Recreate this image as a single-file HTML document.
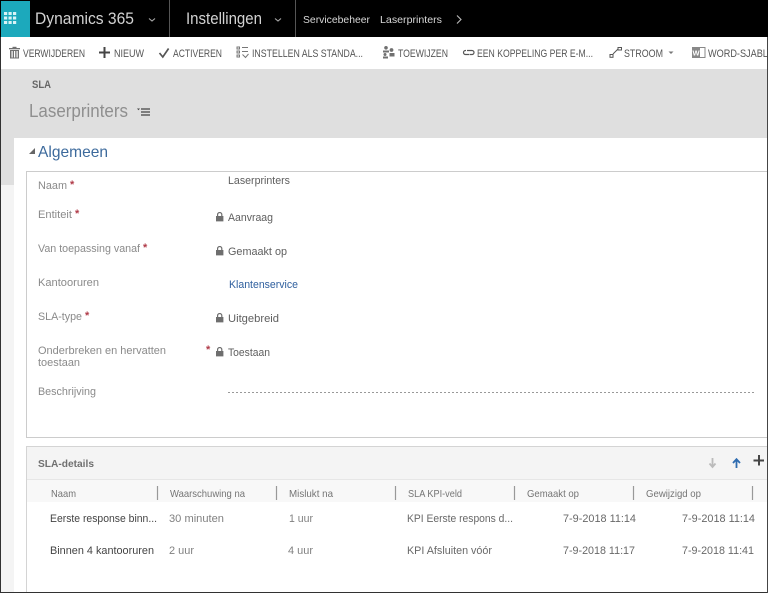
<!DOCTYPE html>
<html><head><meta charset="utf-8"><style>
html,body{margin:0;padding:0;background:#fff;width:768px;height:593px;overflow:hidden}
svg{display:block}
text{font-family:"Liberation Sans",sans-serif;white-space:pre}
.c{font-size:11px;fill:#555}
.l{font-size:11px;fill:#8a8a8a}
.v{font-size:11px;fill:#5e5e5e}
.h{font-size:10.500px;fill:#747474}
.r{font-size:11px;fill:#686868}
.s{font-size:11px;fill:#b03a48;font-weight:bold}
</style></head><body>
<svg width="768" height="593" viewBox="0 0 768 593" xmlns="http://www.w3.org/2000/svg">
<defs><filter id="b" x="0" y="0" width="100%" height="100%"><feGaussianBlur stdDeviation="0.38"/></filter>
<path id="lock" d="M0 4h1V2.600C1 1 2.200 0 3.700 0S6.400 1 6.400 2.600V4h1v5.400H0zM2.200 4h3V2.600c0-.9-.6-1.500-1.500-1.500S2.200 1.700 2.200 2.600z" fill="#6e6e6e"/></defs>
<g filter="url(#b)">
<rect width="768" height="593" fill="#fff"/>
<!-- top bar -->
<rect width="768" height="37" fill="#000"/>
<rect x="1" y="1" width="29" height="36" fill="#1aa9bc"/>
<g fill="#d8f3f6"><rect x="4" y="12" width="3.200" height="3"/><rect x="8.500" y="12" width="3.200" height="3"/><rect x="13" y="12" width="3.200" height="3"/><rect x="4" y="16.500" width="3.200" height="3"/><rect x="8.500" y="16.500" width="3.200" height="3"/><rect x="13" y="16.500" width="3.200" height="3"/><rect x="4" y="21" width="3.200" height="3"/><rect x="8.500" y="21" width="3.200" height="3"/><rect x="13" y="21" width="3.200" height="3"/></g>
<text x="35" y="24" font-size="16.500" fill="#d2d2d2" textLength="99" lengthAdjust="spacingAndGlyphs">Dynamics 365</text>
<path d="M149 18.500l3 2.500 3-2.500" fill="none" stroke="#aaa" stroke-width="1.100"/>
<rect x="169" y="0" width="1" height="37" fill="#555"/>
<text x="186" y="24" font-size="16.500" fill="#d2d2d2" textLength="76" lengthAdjust="spacingAndGlyphs">Instellingen</text>
<path d="M275 18.500l3 2.500 3-2.500" fill="none" stroke="#aaa" stroke-width="1.100"/>
<rect x="295" y="0" width="1" height="37" fill="#555"/>
<text x="303" y="23" font-size="10.500" fill="#d8d8d8" textLength="67" lengthAdjust="spacingAndGlyphs">Servicebeheer</text>
<text x="380" y="23" font-size="10.500" fill="#d8d8d8" textLength="62" lengthAdjust="spacingAndGlyphs">Laserprinters</text>
<path d="M457 15.500l4 4-4 4" fill="none" stroke="#bbb" stroke-width="1.100"/>
<!-- command bar -->
<rect x="0" y="37" width="768" height="32" fill="#fff"/>
<g fill="#707070"><rect x="9" y="48" width="11" height="1.300"/><rect x="12.500" y="46.800" width="4" height="1.200"/><path d="M10 50h9v8.500h-9zM11.500 51v6.500h1.200V51zM14 51v6.500h1.200V51zM16.500 51v6.500h1.200V51z" fill-rule="evenodd"/></g>
<text class="c" x="23" y="57" textLength="62" lengthAdjust="spacingAndGlyphs">VERWIJDEREN</text>
<path d="M104.500 47v11M99 52.500h11" stroke="#444" stroke-width="2" fill="none"/>
<text class="c" x="114" y="57" textLength="30" lengthAdjust="spacingAndGlyphs">NIEUW</text>
<path d="M159.500 53l3.300 4 5.800-8.500" stroke="#555" stroke-width="1.700" fill="none"/>
<text class="c" x="173" y="57" textLength="49" lengthAdjust="spacingAndGlyphs">ACTIVEREN</text>
<g fill="none" stroke="#777" stroke-width="1"><rect x="237" y="47" width="2.500" height="2"/><rect x="237" y="51" width="2.500" height="2"/><rect x="237" y="55" width="2.500" height="2"/><path d="M242 47.500h6M242 51.500h6M242.500 54.500l3 3 3-3.500"/></g>
<text class="c" x="252" y="57" textLength="111" lengthAdjust="spacingAndGlyphs">INSTELLEN ALS STANDA...</text>
<g fill="#707070"><circle cx="386" cy="47.800" r="1.800"/><path d="M383 50.500h6v2h-6z"/><circle cx="385" cy="54.500" r="1.500"/><path d="M383 56.500h5v2h-5z"/><circle cx="391.500" cy="50" r="1.900"/><path d="M389.500 53h5v3.500h-5z"/></g>
<text class="c" x="398" y="57" textLength="50" lengthAdjust="spacingAndGlyphs">TOEWIJZEN</text>
<g fill="none" stroke="#555" stroke-width="1.200"><path d="M466 50.500h-.5a2 2 0 0 0 0 4H469M469.500 54.500h2.500a2 2 0 0 0 0-4h-5"/></g>
<text class="c" x="477" y="57" textLength="116" lengthAdjust="spacingAndGlyphs">EEN KOPPELING PER E-M...</text>
<g fill="none" stroke="#555" stroke-width="1"><rect x="610" y="54.500" width="3" height="2.800"/><path d="M613 54l5-5"/><rect x="618" y="47.500" width="3.500" height="2.500"/></g>
<text class="c" x="624" y="57" textLength="39" lengthAdjust="spacingAndGlyphs">STROOM</text>
<path d="M668.500 51.500h5l-2.500 2.500z" fill="#777"/>
<rect x="697" y="47.500" width="8" height="10" fill="#fff" stroke="#888"/>
<rect x="692" y="47" width="8" height="11" fill="#888"/>
<text x="692.500" y="55.500" font-size="7.500" fill="#fff" font-weight="bold">W</text>
<text class="c" x="708" y="57" textLength="67" lengthAdjust="spacingAndGlyphs">WORD-SJABLO</text>
<!-- header -->
<rect x="0" y="69" width="768" height="69" fill="#dfdfdf"/>
<text x="32" y="88" font-size="11" font-weight="bold" fill="#666" textLength="19" lengthAdjust="spacingAndGlyphs">SLA</text>
<text x="29" y="117" font-size="18" fill="#8f8f8f" textLength="99" lengthAdjust="spacingAndGlyphs">Laserprinters</text>
<path d="M137 108.500h3l-1.500 1.700z" fill="#444"/><path d="M141 109h9M141 112h9M141 115h9" stroke="#444" stroke-width="1.300"/>
<!-- left strip -->
<rect x="1" y="138" width="13" height="47" fill="#dfdfdf"/>
<rect x="1" y="185" width="13" height="408" fill="#f4f4f4"/>
<!-- section -->
<path d="M35 148v6h-6z" fill="#666"/>
<text x="38" y="157" font-size="16" fill="#3c6a9c" textLength="70" lengthAdjust="spacingAndGlyphs">Algemeen</text>
<path d="M768 171.500H26.500V437.500H768" fill="none" stroke="#ccc"/>
<text class="l" x="38" y="189" textLength="29" lengthAdjust="spacingAndGlyphs">Naam</text><text class="s" x="70" y="188">*</text>
<text class="l" x="38" y="218" textLength="34" lengthAdjust="spacingAndGlyphs">Entiteit</text><text class="s" x="75" y="217">*</text>
<text class="l" x="38" y="252" textLength="102" lengthAdjust="spacingAndGlyphs">Van toepassing vanaf</text><text class="s" x="143" y="251">*</text>
<text class="l" x="38" y="286" textLength="61" lengthAdjust="spacingAndGlyphs">Kantooruren</text>
<text class="l" x="38" y="320" textLength="44" lengthAdjust="spacingAndGlyphs">SLA-type</text><text class="s" x="85" y="319">*</text>
<text class="l" x="38" y="354" textLength="128" lengthAdjust="spacingAndGlyphs">Onderbreken en hervatten</text>
<text class="l" x="38" y="366" textLength="42" lengthAdjust="spacingAndGlyphs">toestaan</text><text class="s" x="206" y="353">*</text>
<text class="l" x="38" y="395" textLength="58" lengthAdjust="spacingAndGlyphs">Beschrijving</text>
<text class="v" x="228" y="184" textLength="62" lengthAdjust="spacingAndGlyphs">Laserprinters</text>
<use href="#lock" x="216" y="212"/><text class="v" x="228" y="221" textLength="45" lengthAdjust="spacingAndGlyphs">Aanvraag</text>
<use href="#lock" x="216" y="246"/><text class="v" x="228" y="255" textLength="59" lengthAdjust="spacingAndGlyphs">Gemaakt op</text>
<text x="229" y="288" font-size="11" fill="#2f5f9e" textLength="69" lengthAdjust="spacingAndGlyphs">Klantenservice</text>
<use href="#lock" x="216" y="313"/><text class="v" x="228" y="322" textLength="51" lengthAdjust="spacingAndGlyphs">Uitgebreid</text>
<use href="#lock" x="216" y="347"/><text class="v" x="228" y="356" textLength="42" lengthAdjust="spacingAndGlyphs">Toestaan</text>
<path d="M228 392.500H756" stroke="#999" stroke-dasharray="2 2" fill="none"/>
<!-- subgrid -->
<rect x="26" y="446" width="742" height="147" fill="#fff"/>
<rect x="27" y="447" width="741" height="32" fill="#f4f4f4"/>
<rect x="27" y="479" width="741" height="23" fill="#f8f8f8"/>
<path d="M768 446.500H26.500V593" fill="none" stroke="#d4d4d4"/>
<path d="M27 479.500H768" stroke="#e6e6e6"/>
<text x="38" y="467" font-size="10.500" font-weight="bold" fill="#707070" textLength="56" lengthAdjust="spacingAndGlyphs">SLA-details</text>
<path d="M712.500 458v9M709.500 463.500l3 3.500 3-3.500" stroke="#bbb" stroke-width="1.800" fill="none"/>
<path d="M736.500 468v-9M733 463l3.500-3.800 3.500 3.800" stroke="#2f6cb0" stroke-width="1.800" fill="none"/>
<path d="M759 455v10.500M753.500 460.500h10.500" stroke="#444" stroke-width="2" fill="none"/>
<text class="h" x="51" y="497" textLength="25" lengthAdjust="spacingAndGlyphs">Naam</text>
<text class="h" x="170" y="497" textLength="75" lengthAdjust="spacingAndGlyphs">Waarschuwing na</text>
<text class="h" x="289" y="497" textLength="44" lengthAdjust="spacingAndGlyphs">Mislukt na</text>
<text class="h" x="408" y="497" textLength="54" lengthAdjust="spacingAndGlyphs">SLA KPI-veld</text>
<text class="h" x="527" y="497" textLength="52" lengthAdjust="spacingAndGlyphs">Gemaakt op</text>
<text class="h" x="646" y="497" textLength="55" lengthAdjust="spacingAndGlyphs">Gewijzigd op</text>
<g stroke="#999" stroke-width="1.200"><path d="M157.500 486v14M276.500 486v14M395.500 486v14M514.500 486v14M633.500 486v14M752.500 486v14"/></g>
<text class="r" style="fill:#444" x="50" y="522" textLength="107" lengthAdjust="spacingAndGlyphs">Eerste response binn...</text>
<text class="r" style="fill:#808080" x="169" y="522" textLength="55" lengthAdjust="spacingAndGlyphs">30 minuten</text>
<text class="r" style="fill:#808080" x="289" y="522" textLength="24" lengthAdjust="spacingAndGlyphs">1 uur</text>
<text class="r" x="407" y="522" textLength="106" lengthAdjust="spacingAndGlyphs">KPI Eerste respons d...</text>
<text class="r" x="563" y="522" textLength="73" lengthAdjust="spacingAndGlyphs">7-9-2018 11:14</text>
<text class="r" x="682" y="522" textLength="73" lengthAdjust="spacingAndGlyphs">7-9-2018 11:14</text>
<text class="r" style="fill:#444" x="50" y="554" textLength="104" lengthAdjust="spacingAndGlyphs">Binnen 4 kantooruren</text>
<text class="r" style="fill:#808080" x="169" y="554" textLength="25" lengthAdjust="spacingAndGlyphs">2 uur</text>
<text class="r" style="fill:#808080" x="288" y="554" textLength="25" lengthAdjust="spacingAndGlyphs">4 uur</text>
<text class="r" x="407" y="554" textLength="85" lengthAdjust="spacingAndGlyphs">KPI Afsluiten vóór</text>
<text class="r" x="563" y="554" textLength="72" lengthAdjust="spacingAndGlyphs">7-9-2018 11:17</text>
<text class="r" x="682" y="554" textLength="72" lengthAdjust="spacingAndGlyphs">7-9-2018 11:41</text>
<!-- outer frame -->
<rect x="0" y="37" width="1" height="556" fill="#333"/>
<rect x="0" y="592" width="768" height="1" fill="#333"/>
<rect x="767" y="37" width="1" height="556" fill="#444"/>
</g>
</svg>
</body></html>
